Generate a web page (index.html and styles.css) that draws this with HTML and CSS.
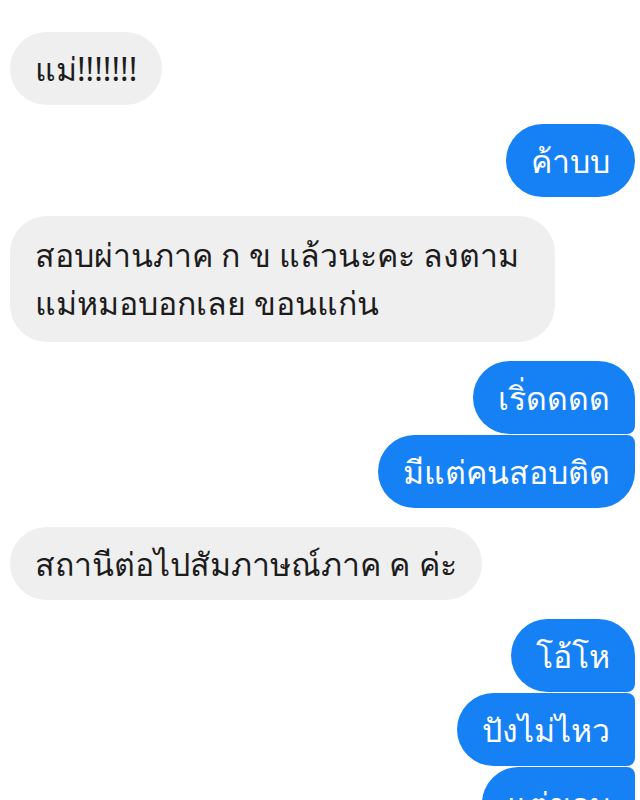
FILE: index.html
```html
<!DOCTYPE html>
<html lang="th">

<head>
    <meta charset="UTF-8" />
    <title>แชท</title>
    <link rel="stylesheet" href="styles.css">
</head>

<body>

    <div class="chat">

        <!-- แม่ -->
        <div class="group in">
            <div class="msg">แม่!!!!!!!</div>
        </div>

        <div class="group out">
            <div class="msg">ค้าบบ</div>
        </div>

        <div class="group in">
            <div class="msg wide">สอบผ่านภาค ก ข แล้วนะคะ ลงตาม แม่หมอบอกเลย ขอนแก่น</div>
        </div>

        <div class="group out">
            <div class="msg">&#3648;&#3619;&#3636;&#3656;&#3604;&#3604;&#3604;&#3604;</div>
            <div class="msg">มีแต่คนสอบติด</div>
        </div>

        <div class="group in">
            <div class="msg">สถานีต่อไปสัมภาษณ์ภาค ค ค่ะ</div>
        </div>

        <div class="group out">
            <div class="msg">โอ้โห</div>
            <div class="msg">ปังไม่ไหว</div>
            <div class="msg">แต่ขอบ</div>
        </div>

    </div>

</body>

</html>
```

FILE: styles.css
```css
* {
    margin: 0;
    padding: 0;
    box-sizing: border-box;
}

body,
html {
    background-color: #ffffff;
    width: 100%;
    height: 100%;
    overflow: hidden;
}

.chat {
    display: flex;
    flex-direction: column;
    gap: 19px;
    padding: 32px 5px 0 10px;
    font-family: 'Noto Sans', 'DejaVu Sans', sans-serif;
    font-size: 32px;
}

.group {
    display: flex;
    flex-direction: column;
    gap: 1px;
}

.in {
    align-items: flex-start;
}

.out {
    align-items: flex-end;
}

.msg {
    padding: 12.5px 25px;
    line-height: 48px;
    border-radius: 37px;
}

.in .msg {
    background-color: #efefef;
    color: #1c1c1c;
}

.out .msg {
    background-color: #1681f5;
    color: #ffffff;
}

.wide {
    max-width: 545px;
    padding-top: 15px;
    padding-bottom: 15px;
}

/* มุมขวาของข้อความที่ต่อกัน */
.out .msg:not(:last-child) {
    border-bottom-right-radius: 8px;
}

.out .msg:not(:first-child) {
    border-top-right-radius: 8px;
}
```
